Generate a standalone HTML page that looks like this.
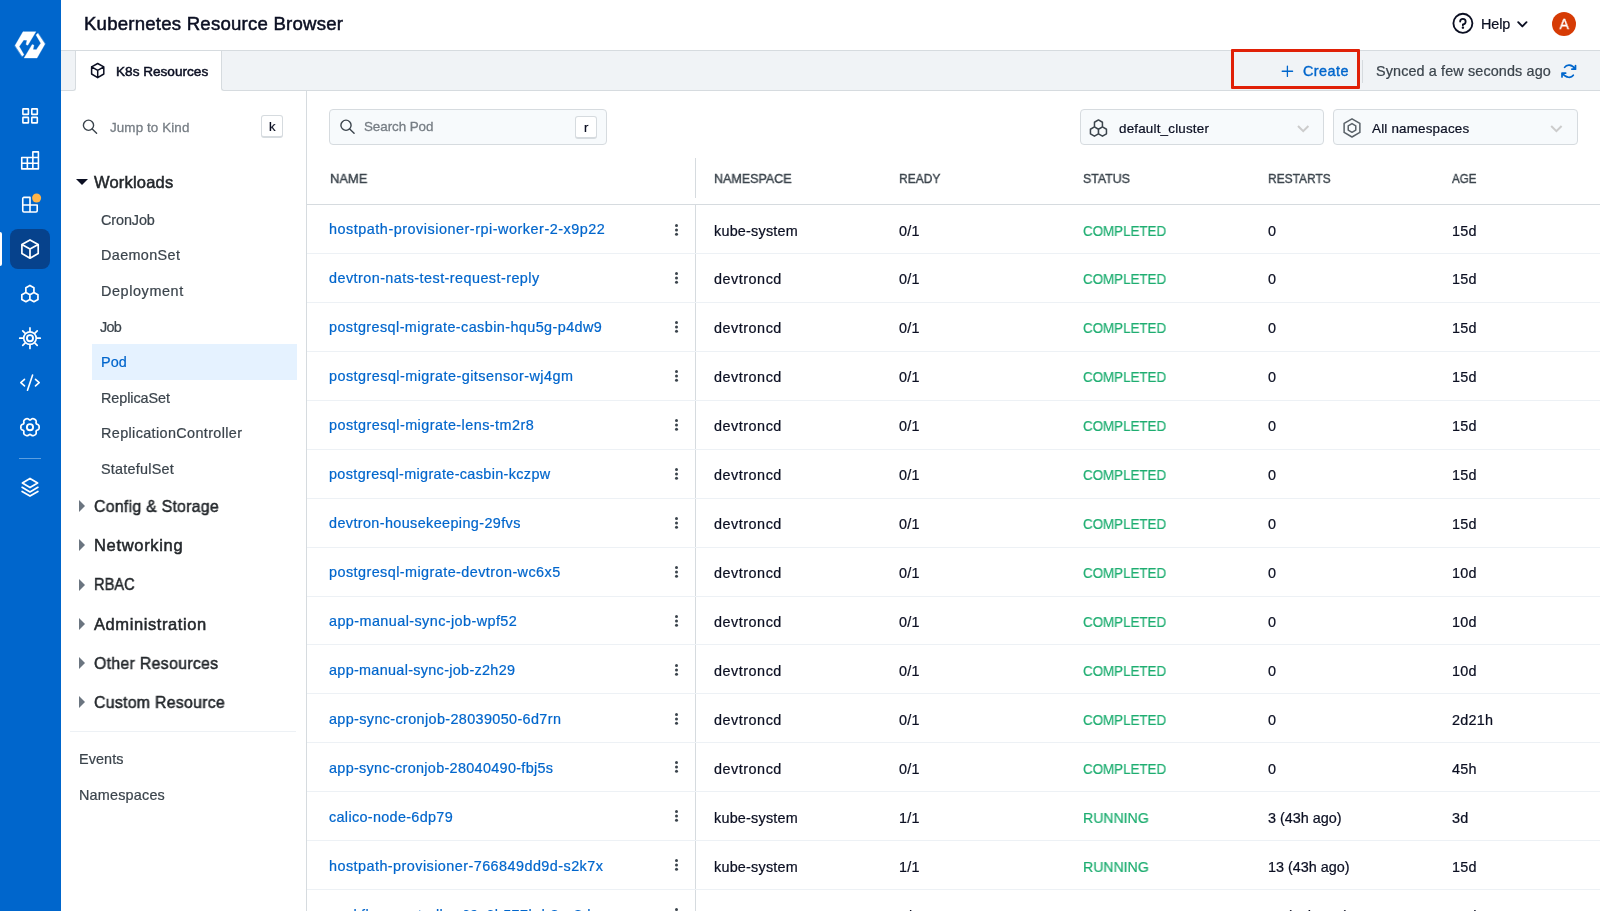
<!DOCTYPE html>
<html lang="en">
<head>
<meta charset="utf-8">
<title>Kubernetes Resource Browser</title>
<style>
*{box-sizing:border-box;margin:0;padding:0}
html,body{width:1600px;height:911px;overflow:hidden;background:#fff}
body{position:relative;font-family:"Liberation Sans",sans-serif;font-size:14px;color:#0b0f22}
.t{position:absolute;white-space:nowrap;line-height:1;will-change:transform;-webkit-text-stroke:.22px currentColor}
svg{position:absolute;overflow:visible;fill:none;stroke-linecap:round;stroke-linejoin:round}
#nav{position:absolute;left:0;top:0;width:61px;height:911px;background:#0066cc}
#nav svg{stroke:#fff;stroke-width:1.5}
#nav .act{position:absolute;left:10px;top:229px;width:40px;height:40px;border-radius:8px;background:#06428c}
#nav .ind{position:absolute;left:0;top:232px;width:2px;height:34px;background:#fff;border-radius:0 2px 2px 0}
#nav .div{position:absolute;left:19px;top:457.5px;width:22px;height:1px;background:#5c9fe0}
#nav .dot{position:absolute;left:32.5px;top:193.5px;width:9px;height:9px;border-radius:50%;background:#ffb549}
#hdr{position:absolute;left:61px;top:0;width:1539px;height:51px;background:#fff;border-bottom:1px solid #d6dbdf}
#tabs{position:absolute;left:61px;top:51px;width:1539px;height:40px;background:#fff}
#tabs .g1{position:absolute;left:0;top:0;width:14.5px;height:40px;background:#f0f3f6;border-right:1px solid #d6dbdf;border-bottom:1px solid #d6dbdf;border-bottom-right-radius:3px}
#tabs .g2{position:absolute;left:160px;top:0;width:1379px;height:40px;background:#f0f3f6;border-left:1px solid #d6dbdf;border-bottom:1px solid #d6dbdf;border-bottom-left-radius:3px}
#side{position:absolute;left:61px;top:91px;width:246px;height:820px;background:#fff;border-right:1px solid #d6dbdf}
.title{color:#0b0f22;-webkit-text-stroke:.5px #0b0f22;letter-spacing:.45px}
.help{color:#0b0f22;letter-spacing:-.1px}
.avatar{position:absolute;left:1552.4px;top:11.9px;width:24.1px;height:24.1px;border-radius:50%;background:#d63b05}
.avA{color:#fff;-webkit-text-stroke:.35px #fff;transform:scaleX(.9);transform-origin:50% 50%}
.tab{color:#0b0f22;-webkit-text-stroke:.5px #0b0f22;letter-spacing:.1px}
.redbox{position:absolute;left:1230.5px;top:49.4px;width:129.7px;height:39.6px;border:3.4px solid #e02007;border-radius:1px}
.create{color:#0066cc;-webkit-text-stroke:.4px #0066cc;letter-spacing:.3px}
.vdiv{position:absolute;left:1361.5px;top:59.5px;width:1px;height:23.5px;background:#d6dbdf}
.sync{color:#3b444c;letter-spacing:.4px}
.ph{color:#767d84;letter-spacing:.4px;-webkit-text-stroke:.3px #767d84}
.kbd{position:absolute;width:22px;height:23px;border:1px solid #d6dbdf;border-bottom-width:2px;border-radius:3px;background:#fff}
.kk{color:#0b0f22}
.it{font-size:14.4px;color:#3b444c;letter-spacing:.1px}
.it.on{color:#0066cc}
.sel{position:absolute;left:92px;top:344px;width:204.5px;height:35.5px;background:#e5f2ff}
.grp{font-size:16.5px;color:#23272b;-webkit-text-stroke:.5px #23272b;letter-spacing:.3px}
.tri{position:absolute;width:0;height:0;border-top:6.2px solid transparent;border-bottom:6.2px solid transparent;border-left:6.8px solid #6b7580}
.tri.down{border:0;border-left:6.2px solid transparent;border-right:6.2px solid transparent;border-top:6.4px solid #0b0f22}
.sdiv{position:absolute;left:70px;top:731px;width:226px;height:1px;background:#edf1f5}
.box{position:absolute;height:36px;top:109px;border:1px solid #d6dbdf;border-radius:4px;background:#f7fafc}
.selv{color:#0b0f22;letter-spacing:.2px}
.th{font-size:13.5px;color:#3b444c;-webkit-text-stroke:.4px #3b444c}
.hsep{position:absolute;left:695px;top:158px;width:1px;height:40px;background:#d6dbdf}
.bsep{position:absolute;left:695px;top:205px;width:1px;height:706px;background:#d6dbdf}
.hline{position:absolute;left:307px;width:1293px;height:1px;background:#edf1f5}
.hline.hd{background:#d6dbdf}
.nm{font-size:14.4px;color:#0066cc;letter-spacing:.5px}
.c{font-size:14.4px;color:#0b0f22;letter-spacing:.22px}
.st{font-size:14.4px;color:#1dad70}
.kb{position:absolute;left:674.5px;width:3px;height:3px;border-radius:50%;background:#3b444c;box-shadow:0 4.4px 0 #3b444c,0 8.8px 0 #3b444c}
</style>
</head>
<body>
<div id="hdr"></div>
<div id="tabs"><div class="g1"></div><div class="g2"></div></div>
<div id="side"></div>
<nav id="nav">
<div class="act"></div><div class="ind"></div><div class="div"></div>
<svg width="61" height="911" viewBox="0 0 61 911" style="left:0;top:0">
<path d="M15.00 45.60 L23.00 31.65 L35.90 31.65 L27.80 45.30 L26.00 44.55 L27.00 40.25 L23.70 40.05 L19.20 46.50 L24.00 54.75 L22.10 56.35Z M45.00 44.10 L37.00 58.05 L24.10 58.05 L32.20 44.40 L34.00 45.15 L33.00 49.45 L36.30 49.65 L40.80 43.20 L36.00 34.95 L37.90 33.35Z" fill="#fff" stroke="#fff" stroke-width="0.3"/>
<rect x="22.9" y="108.85" width="5.5" height="5.5" rx="0.4" stroke-width="1.6"/>
<rect x="31.8" y="108.85" width="5.5" height="5.5" rx="0.4" stroke-width="1.6"/>
<rect x="22.9" y="117.35" width="5.5" height="5.5" rx="0.4" stroke-width="1.6"/>
<rect x="31.8" y="117.35" width="5.5" height="5.5" rx="0.4" stroke-width="1.6"/>
<path d="M21.75 157.5H32.85V151.9H38.4V168.9H21.75Z M27.35 157.5V168.9 M32.85 157.5V168.9 M32.85 157.5H38.4 M21.75 163.2H38.4" stroke-width="1.6"/>
<path d="M22.75 198.6a1.2 1.2 0 0 1 1.2-1.2H30V205H37.2V210.8a1.2 1.2 0 0 1-1.2 1.2H23.95a1.2 1.2 0 0 1-1.2-1.2Z M30 205V212 M22.75 205H30" stroke-width="1.6"/>
<circle cx="36.6" cy="198.05" r="5.3" fill="#0066cc" stroke="none"/><circle cx="36.6" cy="198.05" r="4.5" fill="#ffb549" stroke="none"/>
<path d="M30 239.9L38.2 244.6V253.5L30 258.2L21.9 253.5V244.6Z M21.9 244.6L30 249.1L38.2 244.6 M30 249.1V258.2" stroke-width="1.7"/>
<path d="M29.90 285.45 L33.93 287.78 L33.93 292.43 L29.90 294.75 L25.87 292.43 L25.87 287.78Z M25.87 292.45 L29.90 294.78 L29.90 299.43 L25.87 301.75 L21.84 299.43 L21.84 294.78Z M33.93 292.45 L37.96 294.78 L37.96 299.43 L33.93 301.75 L29.90 299.43 L29.90 294.78Z" stroke-width="1.7"/>
<circle cx="29.98" cy="338.15" r="6.25" stroke-width="1.65"/><circle cx="29.98" cy="338.15" r="3.05" stroke-width="1.9"/><path d="M36.98 338.15L40.23 338.15 M34.93 343.10L37.23 345.40 M29.98 345.15L29.98 348.40 M25.03 343.10L22.73 345.40 M22.98 338.15L19.73 338.15 M25.03 333.20L22.73 330.90 M29.98 331.15L29.98 327.90 M34.93 333.20L37.23 330.90" stroke-width="1.7"/>
<path d="M24.5 379.4L20.8 382.65L24.5 385.9 M32.6 375L27.5 390.2 M35.5 379.4L39.2 382.65L35.5 385.9" stroke-width="1.6"/>
<path d="M39.13 427.20 L39.12 427.68 L39.07 428.16 L38.96 428.62 L38.75 429.06 L38.41 429.46 L37.95 429.79 L37.43 430.06 L36.91 430.29 L36.49 430.52 L36.22 430.80 L36.11 431.18 L36.12 431.66 L36.18 432.22 L36.21 432.81 L36.15 433.37 L35.98 433.86 L35.70 434.26 L35.35 434.59 L34.96 434.87 L34.55 435.12 L34.13 435.35 L33.70 435.55 L33.24 435.69 L32.75 435.72 L32.24 435.63 L31.72 435.40 L31.23 435.08 L30.77 434.74 L30.36 434.49 L29.98 434.40 L29.60 434.49 L29.19 434.74 L28.73 435.08 L28.24 435.40 L27.72 435.63 L27.21 435.72 L26.72 435.69 L26.26 435.55 L25.83 435.35 L25.41 435.12 L25.00 434.87 L24.61 434.59 L24.26 434.26 L23.98 433.86 L23.81 433.37 L23.75 432.81 L23.78 432.22 L23.84 431.66 L23.85 431.18 L23.74 430.80 L23.47 430.52 L23.05 430.29 L22.53 430.06 L22.01 429.79 L21.55 429.46 L21.21 429.06 L21.00 428.62 L20.89 428.16 L20.84 427.68 L20.83 427.20 L20.84 426.72 L20.89 426.24 L21.00 425.78 L21.21 425.34 L21.55 424.94 L22.01 424.61 L22.53 424.34 L23.05 424.11 L23.47 423.88 L23.74 423.60 L23.85 423.22 L23.84 422.74 L23.78 422.18 L23.75 421.59 L23.81 421.03 L23.98 420.54 L24.26 420.14 L24.61 419.81 L25.00 419.53 L25.40 419.28 L25.83 419.05 L26.26 418.85 L26.72 418.71 L27.21 418.68 L27.72 418.77 L28.24 419.00 L28.73 419.32 L29.19 419.66 L29.60 419.91 L29.98 420.00 L30.36 419.91 L30.77 419.66 L31.23 419.32 L31.72 419.00 L32.24 418.77 L32.75 418.68 L33.24 418.71 L33.70 418.85 L34.13 419.05 L34.55 419.28 L34.96 419.53 L35.35 419.81 L35.70 420.14 L35.98 420.54 L36.15 421.03 L36.21 421.59 L36.18 422.18 L36.12 422.74 L36.11 423.22 L36.22 423.60 L36.49 423.88 L36.91 424.11 L37.43 424.34 L37.95 424.61 L38.41 424.94 L38.75 425.34 L38.96 425.78 L39.07 426.24 L39.12 426.72Z" stroke-width="1.7"/><circle cx="29.98" cy="427.2" r="3.1" stroke-width="1.9"/>
<path d="M30 478.4L37.6 483L30 487.6L22.4 483Z M22.1 487.3L30 491.9L37.9 487.3 M22.1 491.5L30 496.1L37.9 491.5" stroke-width="1.7"/>
</svg>

</nav>
<header>
<span class="t title" style="left:83.6px;top:15.30px;font-size:18.6px;letter-spacing:0.22px;">Kubernetes Resource Browser</span>
<svg width="90" height="40" viewBox="1445 5 90 40" style="left:1445px;top:5px" stroke="#0b0f22">
<circle cx="1462.9" cy="23.3" r="9.5" stroke-width="1.85"/>
<path d="M1460.15 21.6a2.75 2.75 0 1 1 2.75 2.75v1.1" stroke-width="1.8"/><circle cx="1462.9" cy="27.65" r="1.2" fill="#0b0f22" stroke="none"/>
<path d="M1518.2 22.2L1522.35 26.4L1526.5 22.2" stroke-width="1.9"/>
</svg>

<span class="t help" style="left:1480.5px;top:16.60px;font-size:14.4px;">Help</span>
<div class="avatar"></div>
<span class="t avA" style="left:1559.3px;top:15.55px;font-size:15.5px;">A</span>
</header>
<section>
<span class="t tab" style="left:115.6px;top:64.90px;font-size:13.6px;letter-spacing:0.0px;">K8s Resources</span>
<div class="redbox"></div>
<span class="t create" style="left:1302.5px;top:64.00px;font-size:14.4px;letter-spacing:0.44px;">Create</span>
<div class="vdiv"></div>
<span class="t sync" style="left:1375.6px;top:64.10px;font-size:14.4px;letter-spacing:0.12px;">Synced a few seconds ago</span>
</section>
<aside>
<span class="t ph" style="left:110px;top:120.80px;font-size:13.4px;letter-spacing:0.11px;">Jump to Kind</span>
<div class="kbd" style="left:261px;top:115px"></div>
<span class="t kk" style="left:268.6px;top:120.00px;font-size:13px;">k</span>
<div class="tri down" style="left:75.9px;top:179.2px"></div>
<span class="t grp" style="left:93.8px;top:173.95px;letter-spacing:0.2px;">Workloads</span>
<div class="sel"></div>
<span class="t it" style="left:101.1px;top:212.80px;letter-spacing:-0.1px;">CronJob</span>
<span class="t it" style="left:101.1px;top:248.30px;letter-spacing:0.37px;">DaemonSet</span>
<span class="t it" style="left:101.1px;top:283.80px;letter-spacing:0.6px;">Deployment</span>
<span class="t it" style="left:100.2px;top:319.80px;letter-spacing:-0.7px;">Job</span>
<span class="t it on" style="left:101.1px;top:355.30px;">Pod</span>
<span class="t it" style="left:101.1px;top:390.80px;letter-spacing:-0.07px;">ReplicaSet</span>
<span class="t it" style="left:101.1px;top:426.30px;letter-spacing:0.37px;">ReplicationController</span>
<span class="t it" style="left:101.1px;top:461.80px;letter-spacing:0.23px;">StatefulSet</span>
<div class="tri" style="left:78.8px;top:500.2px"></div>
<span class="t grp" style="left:94.3px;top:497.75px;transform:scaleX(0.96);transform-origin:0 50%;letter-spacing:0.28px;">Config &amp; Storage</span>
<div class="tri" style="left:78.8px;top:539.4px"></div>
<span class="t grp" style="left:94.3px;top:537.25px;letter-spacing:0.68px;">Networking</span>
<div class="tri" style="left:78.8px;top:578.6px"></div>
<span class="t grp" style="left:94.3px;top:576.25px;transform:scaleX(0.885);transform-origin:0 50%;letter-spacing:0px;">RBAC</span>
<div class="tri" style="left:78.8px;top:617.8px"></div>
<span class="t grp" style="left:94.3px;top:615.75px;letter-spacing:0.58px;">Administration</span>
<div class="tri" style="left:78.8px;top:657.0px"></div>
<span class="t grp" style="left:94.3px;top:654.75px;transform:scaleX(0.96);transform-origin:0 50%;letter-spacing:0.33px;">Other Resources</span>
<div class="tri" style="left:78.8px;top:696.2px"></div>
<span class="t grp" style="left:94.3px;top:693.75px;transform:scaleX(0.96);transform-origin:0 50%;letter-spacing:0.3px;">Custom Resource</span>
<div class="sdiv"></div>
<span class="t it" style="left:79px;top:752.30px;">Events</span>
<span class="t it" style="left:79px;top:788.00px;letter-spacing:0.2px;">Namespaces</span>
</aside>
<main>
<div class="box" style="left:329px;width:278px"></div>
<span class="t ph" style="left:363.5px;top:119.80px;font-size:13.4px;letter-spacing:-0.06px;">Search Pod</span>
<div class="kbd" style="left:575px;top:116px"></div>
<span class="t kk" style="left:583.8px;top:120.60px;font-size:13px;">r</span>
<div class="box" style="left:1080px;width:244px"></div>
<span class="t selv" style="left:1118.5px;top:121.80px;font-size:13.4px;">default_cluster</span>
<div class="box" style="left:1333px;width:245px"></div>
<span class="t selv" style="left:1372px;top:121.80px;font-size:13.4px;">All namespaces</span>
<svg width="1600" height="150" viewBox="0 0 1600 150" style="left:0;top:0">
<path d="M97.7 63.5L103.8 66.9V74L97.7 77.7L91.6 74V66.9Z M91.6 66.9L97.7 70.4L103.8 66.9 M97.7 70.4V77.7" stroke="#0b0f22" stroke-width="1.5"/>
<path d="M1282.2 71.25H1292.6 M1287.4 66.05V76.45" stroke="#0066cc" stroke-width="1.3"/>
<path d="M1564.6 67.4C1566.5 64.3 1571.6 63.8 1575.4 69 M1575.5 65.6V69.2H1571.9 M1573.3 75.2C1571.3 78.1 1566.2 78.5 1562.2 73.2 M1562 76.9V73.1H1565.7" stroke="#0066cc" stroke-width="1.7"/>
<circle cx="88.5" cy="125.25" r="5.1" stroke="#3b444c" stroke-width="1.4"/><path d="M92.2 128.95L96.6 133.3" stroke="#3b444c" stroke-width="1.4"/>
<circle cx="346.0" cy="125.25" r="5.1" stroke="#3b444c" stroke-width="1.4"/><path d="M349.7 128.95L354.1 133.3" stroke="#3b444c" stroke-width="1.4"/>
<path d="M1098.45 119.95 L1102.43 122.25 L1102.43 126.85 L1098.45 129.15 L1094.47 126.85 L1094.47 122.25Z M1094.42 126.95 L1098.40 129.25 L1098.40 133.85 L1094.42 136.15 L1090.44 133.85 L1090.44 129.25Z M1102.48 126.95 L1106.46 129.25 L1106.46 133.85 L1102.48 136.15 L1098.50 133.85 L1098.50 129.25Z" stroke="#3b444c" stroke-width="1.5"/>
<path d="M1352.00 118.80 L1359.88 123.35 L1359.88 132.45 L1352.00 137.00 L1344.12 132.45 L1344.12 123.35Z M1352.00 123.60 L1355.77 125.78 L1355.77 130.12 L1352.00 132.30 L1348.23 130.12 L1348.23 125.78Z" stroke="#596168" stroke-width="1.5"/>
<path d="M1298 126L1303.2 131.2L1308.4 126" stroke="#ccc" stroke-width="2" stroke-linecap="butt" stroke-linejoin="miter"/>
<path d="M1551.2 126L1556.4 131.2L1561.6000000000001 126" stroke="#ccc" stroke-width="2" stroke-linecap="butt" stroke-linejoin="miter"/>
</svg>

<span class="t th" style="left:329.5px;top:172.15px;transform:scaleX(0.958);transform-origin:0 50%;letter-spacing:0px;">NAME</span>
<span class="t th" style="left:714.3px;top:172.15px;transform:scaleX(0.926);transform-origin:0 50%;letter-spacing:0px;">NAMESPACE</span>
<span class="t th" style="left:898.7px;top:172.15px;transform:scaleX(0.89);transform-origin:0 50%;letter-spacing:0px;">READY</span>
<span class="t th" style="left:1083.3px;top:172.15px;transform:scaleX(0.915);transform-origin:0 50%;letter-spacing:0px;">STATUS</span>
<span class="t th" style="left:1267.8px;top:172.15px;transform:scaleX(0.886);transform-origin:0 50%;letter-spacing:0px;">RESTARTS</span>
<span class="t th" style="left:1452px;top:172.15px;transform:scaleX(0.857);transform-origin:0 50%;letter-spacing:0px;">AGE</span>
<div class="hsep"></div><div class="bsep"></div>
<div class="hline hd" style="top:204px"></div>
<span class="t nm" style="left:329.0px;top:222.20px;letter-spacing:0.524px;">hostpath-provisioner-rpi-worker-2-x9p22</span>
<div class="kb" style="top:223.5px"></div>
<span class="t c" style="left:714.3px;top:223.50px;">kube-system</span>
<span class="t c" style="left:898.7px;top:223.50px;">0/1</span>
<span class="t st" style="left:1083.3px;top:223.50px;transform:scaleX(0.928);transform-origin:0 50%;letter-spacing:0px;">COMPLETED</span>
<span class="t c" style="left:1267.8px;top:223.50px;">0</span>
<span class="t c" style="left:1452.3px;top:223.50px;">15d</span>
<div class="hline" style="top:253px"></div>
<span class="t nm" style="left:329.0px;top:271.15px;letter-spacing:0.447px;">devtron-nats-test-request-reply</span>
<div class="kb" style="top:272.4px"></div>
<span class="t c" style="left:714.3px;top:272.45px;letter-spacing:0.52px;">devtroncd</span>
<span class="t c" style="left:898.7px;top:272.45px;">0/1</span>
<span class="t st" style="left:1083.3px;top:272.45px;transform:scaleX(0.928);transform-origin:0 50%;letter-spacing:0px;">COMPLETED</span>
<span class="t c" style="left:1267.8px;top:272.45px;">0</span>
<span class="t c" style="left:1452.3px;top:272.45px;">15d</span>
<div class="hline" style="top:302px"></div>
<span class="t nm" style="left:329.0px;top:320.10px;letter-spacing:0.425px;">postgresql-migrate-casbin-hqu5g-p4dw9</span>
<div class="kb" style="top:321.3px"></div>
<span class="t c" style="left:714.3px;top:321.40px;letter-spacing:0.52px;">devtroncd</span>
<span class="t c" style="left:898.7px;top:321.40px;">0/1</span>
<span class="t st" style="left:1083.3px;top:321.40px;transform:scaleX(0.928);transform-origin:0 50%;letter-spacing:0px;">COMPLETED</span>
<span class="t c" style="left:1267.8px;top:321.40px;">0</span>
<span class="t c" style="left:1452.3px;top:321.40px;">15d</span>
<div class="hline" style="top:351px"></div>
<span class="t nm" style="left:329.0px;top:369.05px;letter-spacing:0.461px;">postgresql-migrate-gitsensor-wj4gm</span>
<div class="kb" style="top:370.2px"></div>
<span class="t c" style="left:714.3px;top:370.35px;letter-spacing:0.52px;">devtroncd</span>
<span class="t c" style="left:898.7px;top:370.35px;">0/1</span>
<span class="t st" style="left:1083.3px;top:370.35px;transform:scaleX(0.928);transform-origin:0 50%;letter-spacing:0px;">COMPLETED</span>
<span class="t c" style="left:1267.8px;top:370.35px;">0</span>
<span class="t c" style="left:1452.3px;top:370.35px;">15d</span>
<div class="hline" style="top:400px"></div>
<span class="t nm" style="left:329.0px;top:418.00px;letter-spacing:0.454px;">postgresql-migrate-lens-tm2r8</span>
<div class="kb" style="top:419.1px"></div>
<span class="t c" style="left:714.3px;top:419.30px;letter-spacing:0.52px;">devtroncd</span>
<span class="t c" style="left:898.7px;top:419.30px;">0/1</span>
<span class="t st" style="left:1083.3px;top:419.30px;transform:scaleX(0.928);transform-origin:0 50%;letter-spacing:0px;">COMPLETED</span>
<span class="t c" style="left:1267.8px;top:419.30px;">0</span>
<span class="t c" style="left:1452.3px;top:419.30px;">15d</span>
<div class="hline" style="top:449px"></div>
<span class="t nm" style="left:329.0px;top:466.95px;letter-spacing:0.36px;">postgresql-migrate-casbin-kczpw</span>
<div class="kb" style="top:468.0px"></div>
<span class="t c" style="left:714.3px;top:468.25px;letter-spacing:0.52px;">devtroncd</span>
<span class="t c" style="left:898.7px;top:468.25px;">0/1</span>
<span class="t st" style="left:1083.3px;top:468.25px;transform:scaleX(0.928);transform-origin:0 50%;letter-spacing:0px;">COMPLETED</span>
<span class="t c" style="left:1267.8px;top:468.25px;">0</span>
<span class="t c" style="left:1452.3px;top:468.25px;">15d</span>
<div class="hline" style="top:498px"></div>
<span class="t nm" style="left:329.0px;top:515.90px;letter-spacing:0.392px;">devtron-housekeeping-29fvs</span>
<div class="kb" style="top:516.9px"></div>
<span class="t c" style="left:714.3px;top:517.20px;letter-spacing:0.52px;">devtroncd</span>
<span class="t c" style="left:898.7px;top:517.20px;">0/1</span>
<span class="t st" style="left:1083.3px;top:517.20px;transform:scaleX(0.928);transform-origin:0 50%;letter-spacing:0px;">COMPLETED</span>
<span class="t c" style="left:1267.8px;top:517.20px;">0</span>
<span class="t c" style="left:1452.3px;top:517.20px;">15d</span>
<div class="hline" style="top:547px"></div>
<span class="t nm" style="left:329.0px;top:564.85px;letter-spacing:0.439px;">postgresql-migrate-devtron-wc6x5</span>
<div class="kb" style="top:565.8px"></div>
<span class="t c" style="left:714.3px;top:566.15px;letter-spacing:0.52px;">devtroncd</span>
<span class="t c" style="left:898.7px;top:566.15px;">0/1</span>
<span class="t st" style="left:1083.3px;top:566.15px;transform:scaleX(0.928);transform-origin:0 50%;letter-spacing:0px;">COMPLETED</span>
<span class="t c" style="left:1267.8px;top:566.15px;">0</span>
<span class="t c" style="left:1452.3px;top:566.15px;">10d</span>
<div class="hline" style="top:596px"></div>
<span class="t nm" style="left:329.0px;top:613.80px;letter-spacing:0.425px;">app-manual-sync-job-wpf52</span>
<div class="kb" style="top:614.7px"></div>
<span class="t c" style="left:714.3px;top:615.10px;letter-spacing:0.52px;">devtroncd</span>
<span class="t c" style="left:898.7px;top:615.10px;">0/1</span>
<span class="t st" style="left:1083.3px;top:615.10px;transform:scaleX(0.928);transform-origin:0 50%;letter-spacing:0px;">COMPLETED</span>
<span class="t c" style="left:1267.8px;top:615.10px;">0</span>
<span class="t c" style="left:1452.3px;top:615.10px;">10d</span>
<div class="hline" style="top:644px"></div>
<span class="t nm" style="left:329.0px;top:662.75px;letter-spacing:0.317px;">app-manual-sync-job-z2h29</span>
<div class="kb" style="top:663.6px"></div>
<span class="t c" style="left:714.3px;top:664.05px;letter-spacing:0.52px;">devtroncd</span>
<span class="t c" style="left:898.7px;top:664.05px;">0/1</span>
<span class="t st" style="left:1083.3px;top:664.05px;transform:scaleX(0.928);transform-origin:0 50%;letter-spacing:0px;">COMPLETED</span>
<span class="t c" style="left:1267.8px;top:664.05px;">0</span>
<span class="t c" style="left:1452.3px;top:664.05px;">10d</span>
<div class="hline" style="top:693px"></div>
<span class="t nm" style="left:329.0px;top:711.70px;letter-spacing:0.37px;">app-sync-cronjob-28039050-6d7rn</span>
<div class="kb" style="top:712.5px"></div>
<span class="t c" style="left:714.3px;top:713.00px;letter-spacing:0.52px;">devtroncd</span>
<span class="t c" style="left:898.7px;top:713.00px;">0/1</span>
<span class="t st" style="left:1083.3px;top:713.00px;transform:scaleX(0.928);transform-origin:0 50%;letter-spacing:0px;">COMPLETED</span>
<span class="t c" style="left:1267.8px;top:713.00px;">0</span>
<span class="t c" style="left:1452.3px;top:713.00px;">2d21h</span>
<div class="hline" style="top:742px"></div>
<span class="t nm" style="left:329.0px;top:760.65px;letter-spacing:0.32px;">app-sync-cronjob-28040490-fbj5s</span>
<div class="kb" style="top:761.4px"></div>
<span class="t c" style="left:714.3px;top:761.95px;letter-spacing:0.52px;">devtroncd</span>
<span class="t c" style="left:898.7px;top:761.95px;">0/1</span>
<span class="t st" style="left:1083.3px;top:761.95px;transform:scaleX(0.928);transform-origin:0 50%;letter-spacing:0px;">COMPLETED</span>
<span class="t c" style="left:1267.8px;top:761.95px;">0</span>
<span class="t c" style="left:1452.3px;top:761.95px;">45h</span>
<div class="hline" style="top:791px"></div>
<span class="t nm" style="left:329.0px;top:809.60px;letter-spacing:0.331px;">calico-node-6dp79</span>
<div class="kb" style="top:810.3px"></div>
<span class="t c" style="left:714.3px;top:810.90px;">kube-system</span>
<span class="t c" style="left:898.7px;top:810.90px;">1/1</span>
<span class="t st" style="left:1083.3px;top:810.90px;transform:scaleX(0.979);transform-origin:0 50%;letter-spacing:0px;">RUNNING</span>
<span class="t c" style="left:1267.8px;top:810.90px;letter-spacing:0.0px;">3 (43h ago)</span>
<span class="t c" style="left:1452.3px;top:810.90px;">3d</span>
<div class="hline" style="top:840px"></div>
<span class="t nm" style="left:329.0px;top:858.55px;letter-spacing:0.453px;">hostpath-provisioner-766849dd9d-s2k7x</span>
<div class="kb" style="top:859.2px"></div>
<span class="t c" style="left:714.3px;top:859.85px;">kube-system</span>
<span class="t c" style="left:898.7px;top:859.85px;">1/1</span>
<span class="t st" style="left:1083.3px;top:859.85px;transform:scaleX(0.979);transform-origin:0 50%;letter-spacing:0px;">RUNNING</span>
<span class="t c" style="left:1267.8px;top:859.85px;letter-spacing:0.0px;">13 (43h ago)</span>
<span class="t c" style="left:1452.3px;top:859.85px;">15d</span>
<div class="hline" style="top:889px"></div>
<span class="t nm" style="left:329.0px;top:907.50px;letter-spacing:0.408px;">workflow-controller-69c6b577bd-8xx8d</span>
<div class="kb" style="top:908.1px"></div>
<span class="t c" style="left:714.3px;top:908.80px;">argo</span>
<span class="t c" style="left:898.7px;top:908.80px;">1/1</span>
<span class="t st" style="left:1083.3px;top:908.80px;transform:scaleX(0.979);transform-origin:0 50%;letter-spacing:0px;">RUNNING</span>
<span class="t c" style="left:1267.8px;top:908.80px;letter-spacing:0.0px;">11 (43h ago)</span>
<span class="t c" style="left:1452.3px;top:908.80px;">15d</span>
</main>
</body>
</html>
